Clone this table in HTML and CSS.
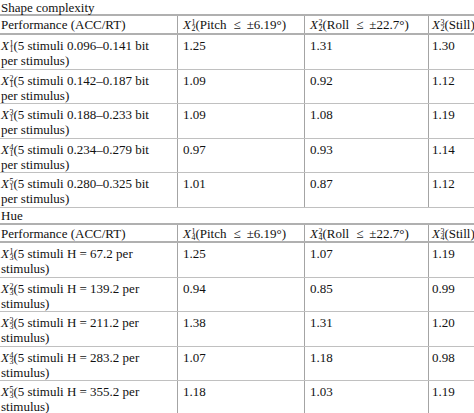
FILE: index.html
```html
<!DOCTYPE html>
<html>
<head>
<meta charset="utf-8">
<link rel="stylesheet" href="styles.css">
</head>
<body>
<div class="tbl">
  <div class="title first">Shape complexity</div>
  <div class="row head">
    <div class="c c1">Performance (ACC/RT)</div>
    <div class="c c2"><span class="v"><i>X</i><span class="ss"><span>1</span><span>2</span></span></span>(Pitch<span class="rel">≤</span>±6.19°)</div>
    <div class="c c3"><span class="v"><i>X</i><span class="ss"><span>2</span><span>2</span></span></span>(Roll<span class="rel">≤</span>±22.7°)</div>
    <div class="c c4"><span class="v"><i>X</i><span class="ss"><span>3</span><span>2</span></span></span>(Still)</div>
  </div>
  <div class="row data">
    <div class="c c1"><span class="w"><span class="v"><i>X</i><span class="ss"><span>1</span><span>1</span></span></span>(5 stimuli 0.096–0.141 bit per stimulus)</span></div>
    <div class="c c2">1.25</div><div class="c c3">1.31</div><div class="c c4">1.30</div>
  </div>
  <div class="row data">
    <div class="c c1"><span class="w"><span class="v"><i>X</i><span class="ss"><span>2</span><span>1</span></span></span>(5 stimuli 0.142–0.187 bit per stimulus)</span></div>
    <div class="c c2">1.09</div><div class="c c3">0.92</div><div class="c c4">1.12</div>
  </div>
  <div class="row data">
    <div class="c c1"><span class="w"><span class="v"><i>X</i><span class="ss"><span>3</span><span>1</span></span></span>(5 stimuli 0.188–0.233 bit per stimulus)</span></div>
    <div class="c c2">1.09</div><div class="c c3">1.08</div><div class="c c4">1.19</div>
  </div>
  <div class="row data">
    <div class="c c1"><span class="w"><span class="v"><i>X</i><span class="ss"><span>4</span><span>1</span></span></span>(5 stimuli 0.234–0.279 bit per stimulus)</span></div>
    <div class="c c2">0.97</div><div class="c c3">0.93</div><div class="c c4">1.14</div>
  </div>
  <div class="row data">
    <div class="c c1"><span class="w"><span class="v"><i>X</i><span class="ss"><span>5</span><span>1</span></span></span>(5 stimuli 0.280–0.325 bit per stimulus)</span></div>
    <div class="c c2">1.01</div><div class="c c3">0.87</div><div class="c c4">1.12</div>
  </div>

  <div class="title">Hue</div>
  <div class="row head">
    <div class="c c1">Performance (ACC/RT)</div>
    <div class="c c2"><span class="v"><i>X</i><span class="ss"><span>1</span><span>4</span></span></span>(Pitch<span class="rel">≤</span>±6.19°)</div>
    <div class="c c3"><span class="v"><i>X</i><span class="ss"><span>2</span><span>4</span></span></span>(Roll<span class="rel">≤</span>±22.7°)</div>
    <div class="c c4"><span class="v"><i>X</i><span class="ss"><span>3</span><span>4</span></span></span>(Still)</div>
  </div>
  <div class="row data">
    <div class="c c1"><span class="w"><span class="v"><i>X</i><span class="ss"><span>1</span><span>3</span></span></span>(5 stimuli H = 67.2 per stimulus)</span></div>
    <div class="c c2">1.25</div><div class="c c3">1.07</div><div class="c c4">1.19</div>
  </div>
  <div class="row data">
    <div class="c c1"><span class="w"><span class="v"><i>X</i><span class="ss"><span>2</span><span>3</span></span></span>(5 stimuli H = 139.2 per stimulus)</span></div>
    <div class="c c2">0.94</div><div class="c c3">0.85</div><div class="c c4">0.99</div>
  </div>
  <div class="row data">
    <div class="c c1"><span class="w"><span class="v"><i>X</i><span class="ss"><span>3</span><span>3</span></span></span>(5 stimuli H = 211.2 per stimulus)</span></div>
    <div class="c c2">1.38</div><div class="c c3">1.31</div><div class="c c4">1.20</div>
  </div>
  <div class="row data">
    <div class="c c1"><span class="w"><span class="v"><i>X</i><span class="ss"><span>4</span><span>3</span></span></span>(5 stimuli H = 283.2 per stimulus)</span></div>
    <div class="c c2">1.07</div><div class="c c3">1.18</div><div class="c c4">0.98</div>
  </div>
  <div class="row data">
    <div class="c c1"><span class="w"><span class="v"><i>X</i><span class="ss"><span>5</span><span>3</span></span></span>(5 stimuli H = 355.2 per stimulus)</span></div>
    <div class="c c2">1.18</div><div class="c c3">1.03</div><div class="c c4">1.19</div>
  </div>
</div>
</body>
</html>
```
FILE: styles.css
```css
html, body {
  margin: 0;
  padding: 0;
  background: #fff;
  overflow: hidden;
}
.tbl {
  width: 474px;
  font-family: "Liberation Serif", "Times New Roman", serif;
  font-size: 13px;
  line-height: 15px;
  color: #111;
}
.title {
  box-sizing: border-box;
  height: 17px;
  padding-left: 1px;
  border-bottom: 2px solid #b0b0b0;
}
.title.first {
  height: 16px;
}
.row {
  display: grid;
  grid-template-columns: 178px 127px 124px 1fr;
  box-sizing: border-box;
}
.row.head {
  height: 18px;
  border-bottom: 2px solid #b0b0b0;
}
.title.first + .row.head {
  height: 19px;
}
.row.data {
  height: 34.6px;
  border-bottom: 1px solid #c0c0c0;
}
.c {
  box-sizing: border-box;
  white-space: nowrap;
}
.head .c {
  padding-top: 1px;
}
.data .c {
  padding-top: 3px;
}
.c1 {
  padding-left: 1px;
  border-right: 1px solid #a4a4a4;
  white-space: normal;
}
.head .c1 {
  white-space: nowrap;
}
.c2 {
  padding-left: 5px;
  border-right: 1px solid #a4a4a4;
}
.c3 {
  padding-left: 5px;
  border-right: 1px solid #a4a4a4;
}
.c4 {
  padding-left: 3px;
}
.w {
  display: block;
  width: 155px;
}
.v i {
  font-style: italic;
}
.ss {
  display: inline-block;
  vertical-align: -2px;
  font-size: 8px;
  line-height: 6px;
  margin-left: 0.5px;
}
.ss span {
  display: block;
}
.rel {
  margin: 0 6px 0 7px;
}
```
